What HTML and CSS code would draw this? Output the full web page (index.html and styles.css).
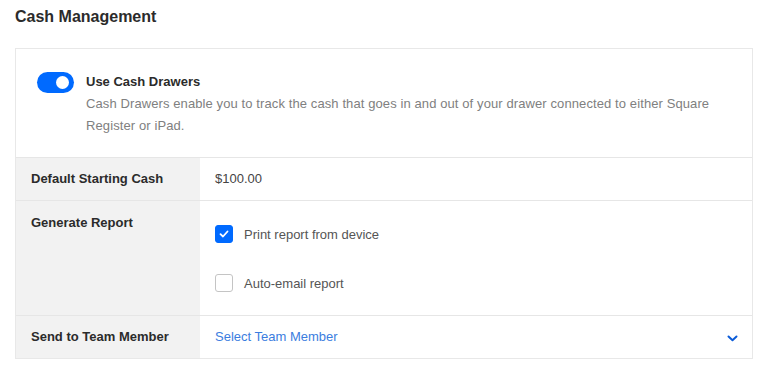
FILE: index.html
```html
<!DOCTYPE html>
<html lang="en">
<head>
    <meta charset="UTF-8">
    <meta name="viewport" content="width=device-width, initial-scale=1.0">
    <title>Cash Management</title>
    <link rel="stylesheet" href="styles.css">
</head>
<body>
    <h1 class="title">Cash Management</h1>
    <div class="panel">
        <div class="drawers">
            <span class="toggle"><span class="knob"></span></span>
            <div class="drawers-text">
                <div class="drawers-label">Use Cash Drawers</div>
                <p class="drawers-desc">Cash Drawers enable you to track the cash that goes in and out of your drawer connected to either Square Register or iPad.</p>
            </div>
        </div>
        <div class="row">
            <div class="row-label">Default Starting Cash</div>
            <div class="row-value">$100.00</div>
        </div>
        <div class="row row-report">
            <div class="row-label">Generate Report</div>
            <div class="row-value checks">
                <label class="check">
                    <span class="box box-on">
                        <svg width="10" height="8" viewBox="0 0 10 8"><path d="M1.5 4.2 L4 6.5 L8.5 1.5" fill="none" stroke="#fff" stroke-width="1.8" stroke-linecap="round" stroke-linejoin="round"/></svg>
                    </span>
                    Print report from device
                </label>
                <label class="check">
                    <span class="box"></span>
                    Auto-email report
                </label>
            </div>
        </div>
        <div class="row">
            <div class="row-label">Send to Team Member</div>
            <div class="row-value select">
                <span class="link">Select Team Member</span>
                <svg class="chevron" width="11" height="7" viewBox="0 0 11 7"><path d="M1.5 1.5 L5.5 5.2 L9.5 1.5" fill="none" stroke="#0b5bd8" stroke-width="2" stroke-linecap="round" stroke-linejoin="round"/></svg>
            </div>
        </div>
    </div>
</body>
</html>
```
FILE: styles.css
```css
body {
    margin: 0;
    padding: 0 15px;
    background: #fff;
    font-family: "Liberation Sans", Arial, sans-serif;
    color: #333;
}
.title {
    margin: 0;
    padding-top: 8px;
    height: 40px;
    font-size: 16px;
    font-weight: bold;
    color: #2b2b2b;
}
.panel {
    width: 736px;
    border: 1px solid #e8e8e8;
    font-size: 13px;
}
.drawers {
    display: flex;
    padding: 22px 20px 20px 21px;
    border-bottom: 1px solid #e6e6e6;
}
.toggle {
    position: relative;
    flex: none;
    width: 37px;
    height: 21px;
    border-radius: 11px;
    background: #006aff;
    margin-top: 1px;
    margin-right: 12px;
}
.knob {
    position: absolute;
    top: 4px;
    right: 5px;
    width: 13px;
    height: 13px;
    border-radius: 50%;
    background: #fff;
}
.drawers-label {
    font-weight: bold;
    line-height: 22px;
    color: #2b2b2b;
}
.drawers-desc {
    margin: 0;
    line-height: 22px;
    letter-spacing: 0.1px;
    color: #808080;
}
.row {
    display: flex;
    border-bottom: 1px solid #e6e6e6;
}
.row:last-child {
    border-bottom: none;
}
.row-label {
    width: 184px;
    flex: none;
    background: #f2f2f2;
    padding: 13px 0 0 15px;
    box-sizing: border-box;
    height: 42px;
    font-weight: bold;
    color: #2b2b2b;
}
.row-value {
    flex: 1;
    padding: 13px 15px 0 15px;
    color: #444;
}
.row-report .row-label {
    height: 114px;
    padding-top: 14px;
}
.checks {
    display: flex;
    flex-direction: column;
    gap: 31px;
    padding-top: 24px;
}
.check {
    display: flex;
    align-items: center;
    gap: 11px;
    color: #555;
}
.box {
    display: flex;
    align-items: center;
    justify-content: center;
    width: 18px;
    height: 18px;
    box-sizing: border-box;
    border: 1.5px solid #c4c4c4;
    border-radius: 3px;
    background: #fff;
}
.box-on {
    background: #006aff;
    border-color: #006aff;
}
.select {
    display: flex;
    justify-content: space-between;
    align-items: flex-start;
    padding-right: 14px;
}
.link {
    color: #3b7de0;
}
.chevron {
    margin-top: 6px;
}
```
